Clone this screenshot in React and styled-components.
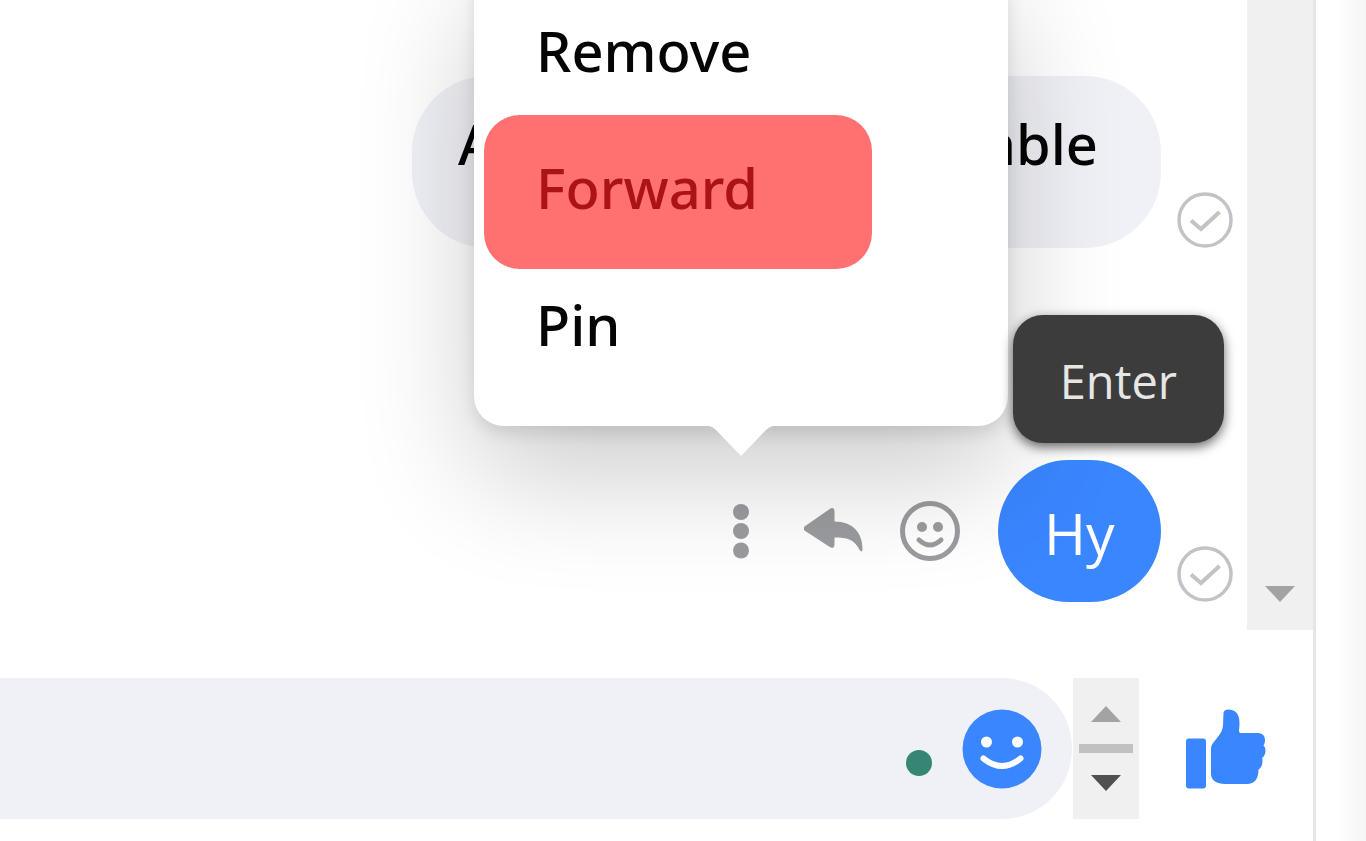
import { useState } from "react";
import styled, { createGlobalStyle } from "styled-components";

const GlobalStyle = createGlobalStyle`
  * {
    box-sizing: border-box;
  }
  body {
    margin: 0;
    overflow: hidden;
    background-color: #ffffff;
    font-family: "Open Sans", "Noto Sans", sans-serif;
  }
  button {
    padding: 0;
    border: none;
    background: none;
    font-family: inherit;
    cursor: pointer;
  }
  svg {
    display: block;
  }
`;

const Page = styled.div`
  display: flex;
  height: 100vh;
`;

const Chat = styled.main`
  display: flex;
  flex: 1;
  flex-direction: column;
  min-width: 0;
`;

const SidePanel = styled.aside`
  width: 53px;
  border-left: 3px solid #e6e6e6;
  background: linear-gradient(to right, #ffffff 40%, #f5f5f5);
`;

const History = styled.section`
  display: flex;
  flex: 1;
  min-height: 0;
`;

const Messages = styled.div`
  display: flex;
  flex: 1;
  flex-direction: column;
  justify-content: flex-end;
  gap: 212px;
  padding: 0 14px 28px;
`;

const ScrollTrack = styled.div`
  display: flex;
  flex-direction: column;
  align-items: center;
  justify-content: flex-end;
  width: 66px;
  padding-bottom: 28px;
  background-color: #f0f0f0;
`;

const MessageRow = styled.div`
  display: flex;
  align-items: flex-end;
  justify-content: flex-end;
  gap: 16px;
`;

const Bubble = styled.div`
  position: relative;
  display: flex;
  justify-content: space-between;
  font-family: ${(props) => (props.$own ? "inherit" : '"Noto Sans", sans-serif')};
  font-size: ${(props) => (props.$own ? "57px" : "56px")};
  line-height: 74px;
  color: ${(props) => (props.$own ? "#ffffff" : "#050505")};
  background-color: ${(props) => (props.$own ? "#3a86ff" : "#f0f1f6")};
  width: ${(props) => (props.$own ? "163px" : "749px")};
  height: ${(props) => (props.$own ? "142px" : "172px")};
  padding: ${(props) => (props.$own ? "36px 46px" : "30px 63px 0 46px")};
  border-radius: 76px;
  font-weight: ${(props) => (props.$own ? 400 : 500)};
`;

const Tooltip = styled.span`
  position: absolute;
  z-index: 3;
  right: -63px;
  bottom: calc(100% + 17px);
  padding: 34px 47px 30px;
  border-radius: 30px;
  background-color: #3c3c3c;
  box-shadow: 0 4px 12px rgba(0, 0, 0, 0.6);
  color: #e6e6e6;
  font-size: 47px;
  line-height: 64px;
`;

const Actions = styled.div`
  display: flex;
  align-self: center;
  align-items: center;
  gap: 36px;
  margin-right: 22px;
`;

const MenuAnchor = styled.div`
  position: relative;
`;

const ActionButton = styled.button`
  display: flex;
  align-items: center;
  justify-content: center;
  width: ${(props) => (props.$narrow ? "54px" : "60px")};
  height: 60px;
`;

const Menu = styled.div`
  position: absolute;
  z-index: 2;
  left: 50%;
  bottom: calc(100% + 75px);
  display: flex;
  flex-direction: column;
  align-items: flex-start;
  width: 534px;
  margin-left: -267px;
  padding: 37px 10px;
  border-radius: 30px;
  background-color: #ffffff;
  box-shadow: 0 50px 118px rgba(0, 0, 0, 0.2), 0 8px 16px rgba(0, 0, 0, 0.1);
`;

const MenuItem = styled.button`
  width: 388px;
  height: ${(props) => (props.$active ? "154px" : "120px")};
  padding: 0 52px 10px;
  border-radius: 36px;
  background-color: ${(props) => (props.$active ? "#ff7070" : "transparent")};
  color: ${(props) => (props.$active ? "#ab1318" : "#050505")};
  font-family: "Noto Sans", sans-serif;
  font-size: 56px;
  font-weight: 500;
  line-height: 74px;
  text-align: left;
`;

const MenuArrow = styled.svg`
  position: absolute;
  top: 100%;
  left: 50%;
  margin-left: -32px;
`;

const Composer = styled.form`
  display: flex;
  align-items: center;
  padding: 48px 47px 22px 0;
`;

const Field = styled.div`
  display: flex;
  flex: 1;
  align-items: center;
  gap: 30px;
  height: 141px;
  padding-right: 30px;
  border-radius: 0 70px 70px 0;
  background-color: #f0f1f6;
`;

const TextInput = styled.input`
  flex: 1;
  min-width: 0;
  height: 100%;
  border: none;
  outline: none;
  background: none;
  color: #050505;
  font-family: inherit;
  font-size: 56px;
`;

const StatusDot = styled.span`
  width: 26px;
  height: 26px;
  margin-top: 28px;
  border-radius: 50%;
  background-color: #358672;
`;

const Stepper = styled.div`
  display: flex;
  flex-direction: column;
  align-items: center;
  justify-content: center;
  gap: 22px;
  width: 66px;
  height: 141px;
  margin: 0 46px 0 1px;
  background-color: #f0f0f0;
`;

const StepperThumb = styled.div`
  width: 54px;
  height: 9px;
  background-color: #c1c1c1;
`;

function Triangle({ up, color }) {
  return (
    <svg width="30" height="16" viewBox="0 0 30 16" fill={color}>
      <path d={up ? "M0 16 15 0l15 16z" : "M0 0h30L15 16z"} />
    </svg>
  );
}

function SentIcon() {
  return (
    <svg width="56" height="56" viewBox="0 0 56 56" fill="none" stroke="#c2c3c6">
      <circle cx="28" cy="28" r="26" strokeWidth="3.5" />
      <path d="M14 28.5 24 37l18.500-17" strokeWidth="4" />
    </svg>
  );
}

function DotsIcon() {
  return (
    <svg width="16" height="56" viewBox="0 0 16 56" fill="#9b9c9f">
      <circle cx="8" cy="9" r="8" />
      <circle cx="8" cy="28" r="8" />
      <circle cx="8" cy="47.500" r="8" />
    </svg>
  );
}

function ReplyIcon() {
  return (
    <svg width="60" height="60" viewBox="0 0 60 60" fill="#9b9c9f">
      <path d="M.5 25.500 25 8.500Q30 5 30.500 10v10.500C49 20.500 58.500 32 58.500 48q0 4-2.500 1.500C50 38 43 36.500 30.500 36.500V44q-.5 5-5.500 1.500L.5 29.500q-2.500-2 0-4z" />
    </svg>
  );
}

function ReactIcon() {
  return (
    <svg width="60" height="60" viewBox="0 0 60 60" fill="none" stroke="#9b9c9f">
      <circle cx="30" cy="30" r="27.500" strokeWidth="5" />
      <g fill="#9b9c9f" stroke="none">
        <circle cx="22" cy="26" r="5" />
        <circle cx="38" cy="26" r="5" />
      </g>
      <path d="M19 39q11 10 22 0" strokeWidth="5" strokeLinecap="round" />
    </svg>
  );
}

function EmojiIcon() {
  return (
    <svg width="80" height="80" viewBox="0 0 80 80">
      <circle cx="40" cy="40" r="39.500" fill="#3a86ff" />
      <circle cx="24.500" cy="33" r="5.500" fill="#ffffff" />
      <circle cx="55.500" cy="33" r="5.500" fill="#ffffff" />
      <path
        d="M21.500 49.500q18.500 15 37 0"
        fill="none"
        stroke="#ffffff"
        strokeWidth="6"
        strokeLinecap="round"
      />
    </svg>
  );
}

function LikeIcon() {
  return (
    <svg width="81" height="80" viewBox="0 0 81 80" fill="#3a86ff">
      <rect x="1" y="29.500" width="20" height="50" rx="3" />
      <path d="M38.500 4Q39 .5 43 .5c8 0 11.500 5 11.500 13.500 0 4-.5 6-.5 8 0 1.500 1 2 2 2h16c5 0 8 2.500 8 7 0 2-.5 4-1.500 5.500 1.500 1.500 2 3 2 5 0 3.500-1.500 6-3.500 7.500.5 1 .5 2 .5 3 0 4-1.500 7-4 8.500C73.500 70 69.500 75 62 75H40c-8 0-14-3.500-14-10V40c0-5 3-7 6-11 4-5 6-9 6-13z" />
    </svg>
  );
}

const menuItems = ["Remove", "Forward", "Pin"];

function App() {
  const [text, setText] = useState("");

  return (
    <>
      <GlobalStyle />
      <Page>
        <Chat>
          <History>
            <Messages>
              <MessageRow>
                <Bubble>
                  <span>A</span>
                  <span>able</span>
                </Bubble>
                <SentIcon />
              </MessageRow>
              <MessageRow>
                <Actions>
                  <MenuAnchor>
                    <ActionButton $narrow aria-label="More">
                      <DotsIcon />
                    </ActionButton>
                    <Menu>
                      {menuItems.map((item) => (
                        <MenuItem key={item} $active={item === "Forward"}>
                          {item}
                        </MenuItem>
                      ))}
                      <MenuArrow width="64" height="30" viewBox="0 0 64 30" fill="#ffffff">
                        <path d="M0 0h64q-4 1-7 4L32 30 7 4Q4 1 0 0z" />
                      </MenuArrow>
                    </Menu>
                  </MenuAnchor>
                  <ActionButton aria-label="Reply">
                    <ReplyIcon />
                  </ActionButton>
                  <ActionButton aria-label="React">
                    <ReactIcon />
                  </ActionButton>
                </Actions>
                <Bubble $own>
                  Hy
                  <Tooltip role="tooltip">Enter</Tooltip>
                </Bubble>
                <SentIcon />
              </MessageRow>
            </Messages>
            <ScrollTrack>
              <Triangle color="#a3a3a3" />
            </ScrollTrack>
          </History>
          <Composer onSubmit={(e) => e.preventDefault()}>
            <Field>
              <TextInput
                aria-label="Message"
                value={text}
                onChange={(e) => setText(e.target.value)}
              />
              <StatusDot />
              <button type="button" aria-label="Emoji">
                <EmojiIcon />
              </button>
            </Field>
            <Stepper>
              <Triangle up color="#a3a3a3" />
              <StepperThumb />
              <Triangle color="#505050" />
            </Stepper>
            <button type="button" aria-label="Like">
              <LikeIcon />
            </button>
          </Composer>
        </Chat>
        <SidePanel />
      </Page>
    </>
  );
}

export default App;
